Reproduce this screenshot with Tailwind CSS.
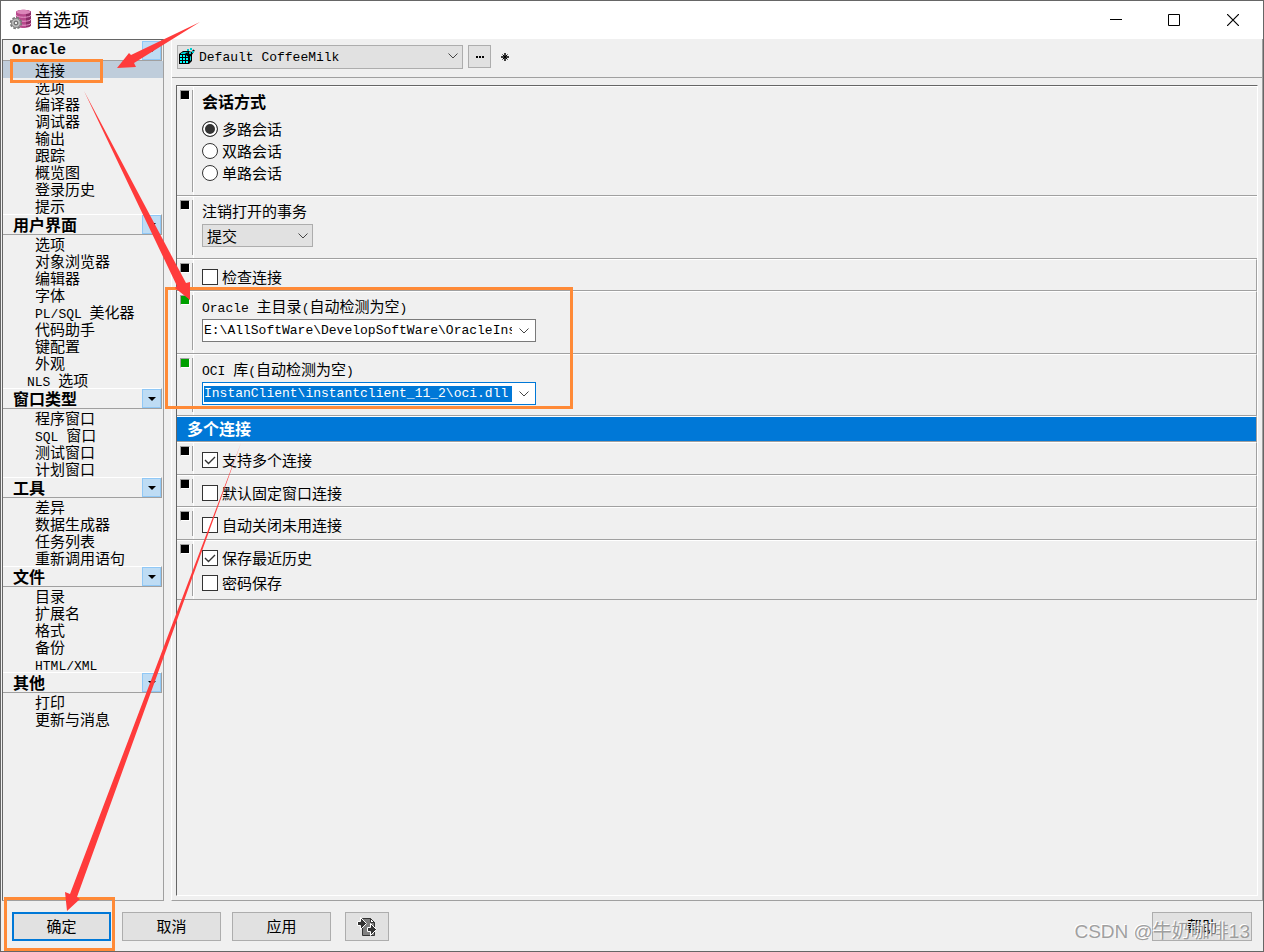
<!DOCTYPE html>
<html lang="zh-CN">
  <head>
    <meta charset="UTF-8" />
    <meta name="viewport" content="width=device-width, initial-scale=1" />
    <title>首选项</title>
    <!-- Tailwind CSS -->
    <script src="https://cdn.jsdelivr.net/npm/@tailwindcss/browser@4"></script>
  </head>
  <body class="bg-[#f0f0f0] text-black text-[15px] font-['Noto_Sans_CJK_SC',sans-serif]">
    <div class="relative min-h-screen flex flex-col border border-[#666] overflow-hidden">
      <!-- Barre de titre -->
      <header class="h-[38px] shrink-0 bg-white flex items-center pl-2">
        <svg class="w-6 h-6" viewBox="0 0 24 24">
          <path d="M7 4c0-3 15-3 15 0v13c0 4-15 4-15 0z" fill="#b8498c" />
          <path d="M17 2.500c4 .4 5 1 5 1.500v13c0 1-2 2-5 2z" fill="#8c2c68" />
          <path d="M7 7c0 3 15 3 15 0M8 11c0 3 14 3 14 0M8 15c0 3 14 3 14 0" fill="none" stroke="#e79aca" />
          <ellipse cx="14.500" cy="4" rx="7" ry="2.200" fill="#dc86ba" />
          <circle cx="7" cy="15" r="5" fill="#b5b5b5" stroke="#777" stroke-width="2.400" stroke-dasharray="2.400 1.500" />
          <circle cx="7" cy="15" r="4.500" fill="#bdbdbd" stroke="#888" />
          <circle cx="7" cy="15" r="1.900" fill="#eee" stroke="#555" />
        </svg>
        <h1 class="ml-[2px] pb-[2px] text-lg">首选项</h1>
        <div class="ml-auto flex">
          <button class="w-[58px] h-9 flex items-center justify-center" aria-label="最小化">
            <svg class="w-3 h-3" viewBox="0 0 12 12"><path d="M0 5.500h12" stroke="#000" /></svg>
          </button>
          <button class="w-[58px] h-9 flex items-center justify-center" aria-label="最大化">
            <svg class="w-3 h-3" viewBox="0 0 12 12"><path d="M.5.5h11v11H.5z" fill="none" stroke="#000" /></svg>
          </button>
          <button class="w-[60px] h-9 flex items-center justify-center" aria-label="关闭">
            <svg class="w-3 h-3" viewBox="0 0 12 12"><path d="M0 0l12 12M12 0L0 12" stroke="#000" stroke-width="1.200" /></svg>
          </button>
        </div>
      </header>

      <div class="grow flex">
        <!-- Menu de gauche -->
        <nav class="w-[162px] shrink-0 ml-px border-l border-t border-r border-b border-l-[#666] border-t-[#666] border-r-[#a0a0a0] border-b-[#a0a0a0] leading-[17px]">
          <section>
            <h2 class="h-[21px] mr-px pl-[9px] flex items-center justify-between font-bold font-['Liberation_Mono',monospace] border-b border-r border-[#a0a0a0]">
              Oracle
              <button class="w-[19px] h-[19px] bg-[#bedcf4] border border-[#90c8f6] flex items-center justify-center" aria-label="展开"><svg class="w-2 h-1" viewBox="0 0 8 4"><path d="M0 0h8L4 4z" /></svg></button>
            </h2>
            <ul class="*:h-[17px] *:pl-8">
              <li class="bg-[#bfcddb]"><a href="#">连接</a></li>
              <li><a href="#">选项</a></li>
              <li><a href="#">编译器</a></li>
              <li><a href="#">调试器</a></li>
              <li><a href="#">输出</a></li>
              <li><a href="#">跟踪</a></li>
              <li><a href="#">概览图</a></li>
              <li><a href="#">登录历史</a></li>
              <li><a href="#">提示</a></li>
            </ul>
          </section>
          <section>
            <h2 class="h-[21px] mr-px pl-[10px] flex items-center justify-between text-base leading-[17px] font-bold border-t border-t-white border-b border-r border-b-[#a0a0a0] border-r-[#a0a0a0]">
              用户界面
              <button class="w-[19px] h-[19px] bg-[#bedcf4] border border-[#90c8f6] flex items-center justify-center" aria-label="展开"><svg class="w-2 h-1" viewBox="0 0 8 4"><path d="M0 0h8L4 4z" /></svg></button>
            </h2>
            <ul class="*:h-[17px] *:pl-8">
              <li><a href="#">选项</a></li>
              <li><a href="#">对象浏览器</a></li>
              <li><a href="#">编辑器</a></li>
              <li><a href="#">字体</a></li>
              <li><a href="#"><span class="text-[13px] font-['Liberation_Mono',monospace]">PL/SQL </span>美化器</a></li>
              <li><a href="#">代码助手</a></li>
              <li><a href="#">键配置</a></li>
              <li><a href="#">外观</a></li>
              <li class="-ml-2"><a href="#"><span class="text-[13px] font-['Liberation_Mono',monospace]">NLS </span>选项</a></li>
            </ul>
          </section>
          <section>
            <h2 class="h-[21px] mr-px pl-[10px] flex items-center justify-between text-base leading-[17px] font-bold border-t border-t-white border-b border-r border-b-[#a0a0a0] border-r-[#a0a0a0]">
              窗口类型
              <button class="w-[19px] h-[19px] bg-[#bedcf4] border border-[#90c8f6] flex items-center justify-center" aria-label="展开"><svg class="w-2 h-1" viewBox="0 0 8 4"><path d="M0 0h8L4 4z" /></svg></button>
            </h2>
            <ul class="*:h-[17px] *:pl-8">
              <li><a href="#">程序窗口</a></li>
              <li><a href="#"><span class="text-[13px] font-['Liberation_Mono',monospace]">SQL </span>窗口</a></li>
              <li><a href="#">测试窗口</a></li>
              <li><a href="#">计划窗口</a></li>
            </ul>
          </section>
          <section>
            <h2 class="h-[21px] mr-px pl-[10px] flex items-center justify-between text-base leading-[17px] font-bold border-t border-t-white border-b border-r border-b-[#a0a0a0] border-r-[#a0a0a0]">
              工具
              <button class="w-[19px] h-[19px] bg-[#bedcf4] border border-[#90c8f6] flex items-center justify-center" aria-label="展开"><svg class="w-2 h-1" viewBox="0 0 8 4"><path d="M0 0h8L4 4z" /></svg></button>
            </h2>
            <ul class="*:h-[17px] *:pl-8">
              <li><a href="#">差异</a></li>
              <li><a href="#">数据生成器</a></li>
              <li><a href="#">任务列表</a></li>
              <li><a href="#">重新调用语句</a></li>
            </ul>
          </section>
          <section>
            <h2 class="h-[21px] mr-px pl-[10px] flex items-center justify-between text-base leading-[17px] font-bold border-t border-t-white border-b border-r border-b-[#a0a0a0] border-r-[#a0a0a0]">
              文件
              <button class="w-[19px] h-[19px] bg-[#bedcf4] border border-[#90c8f6] flex items-center justify-center" aria-label="展开"><svg class="w-2 h-1" viewBox="0 0 8 4"><path d="M0 0h8L4 4z" /></svg></button>
            </h2>
            <ul class="*:h-[17px] *:pl-8">
              <li><a href="#">目录</a></li>
              <li><a href="#">扩展名</a></li>
              <li><a href="#">格式</a></li>
              <li><a href="#">备份</a></li>
              <li><a href="#" class="text-[13px] font-['Liberation_Mono',monospace]">HTML/XML</a></li>
            </ul>
          </section>
          <section>
            <h2 class="h-[21px] mr-px pl-[10px] flex items-center justify-between text-base leading-[17px] font-bold border-t border-t-white border-b border-r border-b-[#a0a0a0] border-r-[#a0a0a0]">
              其他
              <button class="w-[19px] h-[19px] bg-[#bedcf4] border border-[#90c8f6] flex items-center justify-center" aria-label="展开"><svg class="w-2 h-1" viewBox="0 0 8 4"><path d="M0 0h8L4 4z" /></svg></button>
            </h2>
            <ul class="*:h-[17px] *:pl-8">
              <li><a href="#">打印</a></li>
              <li><a href="#">更新与消息</a></li>
            </ul>
          </section>
        </nav>

        <!-- Panneau de droite -->
        <main class="grow min-w-0 ml-[7px] border-l border-l-white border-r border-b border-r-[#a0a0a0] border-b-[#a0a0a0] flex flex-col">
          <div class="h-[39px] shrink-0 pl-[5px] pt-[5px] flex border-b border-[#a0a0a0]">
            <div class="relative w-[286px] h-6">
              <select aria-label="首选项集" class="appearance-none w-full h-6 pl-[21px] pt-[2px] bg-[#e1e1e1] border border-[#adadad] text-[13px] font-['Liberation_Mono',monospace]">
                <option>Default CoffeeMilk</option>
              </select>
              <svg class="absolute left-[2px] top-1 w-4 h-4" viewBox="0 0 16 16">
                <path d="M0 6l4-3h5l4 1v9l-3 3H0z" fill="#000" />
                <path d="M1 7h2v2H1zM4 7h2v2H4zM7 7h2v2H7zM1 10h2v2H1zM4 10h2v2H4zM7 10h2v2H7zM1 13h2v2H1zM4 13h2v2H4zM7 13h2v2H7z" fill="#0ff" />
                <path d="M2 5l3-1h4L8 6H2zM11 7l1-1v6l-1 1z" fill="#00d8d8" />
                <path d="M7 5l2 3M9 3l2 5M15 2l-4 6" stroke="#000" stroke-width="2" />
                <path d="M8 1h2v2H8zM11 0h2v2h-2zM13 3h2v2h-2zM10 4h2v2h-2z" fill="#0cc" />
              </svg>
              <svg class="absolute right-[5px] top-[9px] w-[10px] h-[6px] pointer-events-none" viewBox="0 0 10 6"><path d="M.5.5L5 5 9.500.5" fill="none" stroke="#444" /></svg>
            </div>
            <button class="ml-[5px] mt-px w-[23px] h-[23px] bg-[#e1e1e1] border border-[#adadad] flex items-center justify-center" aria-label="更多">
              <svg class="w-2 h-[2px]" viewBox="0 0 8 2"><path d="M0 0h2v2H0zM3 0h2v2H3zM6 0h2v2H6z" /></svg>
            </button>
            <svg class="ml-[10px] mt-[9px] w-2 h-2" viewBox="0 0 8 8"><path d="M4 0v8M0 4h8" stroke="#000" stroke-width="1.500" /><path d="M1.500 1.500l5 5M6.500 1.500l-5 5" stroke="#000" /></svg>
          </div>

          <div class="grow mt-[7px] mr-1 mb-1 ml-1 border-l border-t border-r border-b border-l-[#666] border-t-[#666] border-r-white border-b-white">
            <section class="h-[110px] flex border-t border-t-white border-b border-b-[#a0a0a0]">
              <div class="w-4 my-[3px] pl-[3px] border-r border-[#a0a0a0]"><i class="block w-[10px] h-[10px] bg-black border border-t-[#a0a0a0] border-l-[#a0a0a0] border-b-white border-r-white"></i></div>
              <div class="pl-2 pt-1 border-l border-white">
                <h3 class="h-5 leading-5 text-base font-bold">会话方式</h3>
                <div class="mt-[7px]">
                  <label class="h-[22px] flex items-center gap-1"><input type="radio" name="session" checked class="appearance-none w-4 h-4 rounded-full bg-white border border-[#333] checked:bg-[#333] checked:shadow-[inset_0_0_0_2px_#fff]" />多路会话</label>
                  <label class="h-[22px] flex items-center gap-1"><input type="radio" name="session" class="appearance-none w-4 h-4 rounded-full bg-white border border-[#333] checked:bg-[#333] checked:shadow-[inset_0_0_0_2px_#fff]" />双路会话</label>
                  <label class="h-[22px] flex items-center gap-1"><input type="radio" name="session" class="appearance-none w-4 h-4 rounded-full bg-white border border-[#333] checked:bg-[#333] checked:shadow-[inset_0_0_0_2px_#fff]" />单路会话</label>
                </div>
              </div>
            </section>

            <section class="h-[63px] flex border-t border-t-white border-b border-b-[#a0a0a0]">
              <div class="w-4 my-[3px] pl-[3px] border-r border-[#a0a0a0]"><i class="block w-[10px] h-[10px] bg-black border border-t-[#a0a0a0] border-l-[#a0a0a0] border-b-white border-r-white"></i></div>
              <div class="pl-2 pt-1 border-l border-white">
                <label for="logoff" class="block h-5 leading-5">注销打开的事务</label>
                <div class="relative mt-[3px] w-[111px]">
                  <select id="logoff" class="appearance-none block w-full h-[23px] pl-1 bg-[#e1e1e1] border border-[#adadad] leading-5">
                    <option>提交</option>
                    <option>回滚</option>
                  </select>
                  <svg class="absolute right-[5px] top-[9px] w-[10px] h-[6px] pointer-events-none" viewBox="0 0 10 6"><path d="M.5.5L5 5 9.500.5" fill="none" stroke="#444" /></svg>
                </div>
              </div>
            </section>

            <section class="h-8 flex border-t border-t-white border-b border-b-[#a0a0a0] border-r border-r-[#a0a0a0]">
              <div class="w-4 my-[3px] pl-[3px] border-r border-[#a0a0a0]"><i class="block w-[10px] h-[10px] bg-black border border-t-[#a0a0a0] border-l-[#a0a0a0] border-b-white border-r-white"></i></div>
              <div class="pl-2 pt-[6px] border-l border-white">
                <label class="h-[22px] flex items-center gap-1"><input type="checkbox" class="appearance-none w-4 h-4 bg-white border border-[#333]" />检查连接</label>
              </div>
            </section>

            <section class="h-[63px] flex border-t border-t-white border-b border-b-[#a0a0a0] border-r border-r-[#a0a0a0]">
              <div class="w-4 my-[3px] pl-[3px] border-r border-[#a0a0a0]"><i class="block w-[10px] h-[10px] bg-[#00a000] border border-t-[#a0a0a0] border-l-[#a0a0a0] border-b-white border-r-white"></i></div>
              <div class="pl-2 pt-1 border-l border-white">
                <label for="home" class="block h-5 leading-5"><span class="text-[13px] font-['Liberation_Mono',monospace]">Oracle </span>主目录<span class="text-[13px] font-['Liberation_Mono',monospace]">(</span>自动检测为空<span class="text-[13px] font-['Liberation_Mono',monospace]">)</span></label>
                <div class="mt-[3px] w-[334px] h-[23px] bg-white border border-[#7a7a7a] flex items-center pl-px">
                  <input id="home" type="text" value="E:\AllSoftWare\DevelopSoftWare\OracleInstanClient\instantclient_11_2" class="w-[308px] h-4 text-[13px] leading-4 font-['Liberation_Mono',monospace] outline-none" />
                  <button class="grow h-5 flex items-center justify-center" aria-label="展开"><svg class="w-[10px] h-[6px]" viewBox="0 0 10 6"><path d="M.5.5L5 5 9.500.5" fill="none" stroke="#444" /></svg></button>
                </div>
              </div>
            </section>

            <section class="h-[62px] flex border-t border-t-white border-b border-b-[#a0a0a0] border-r border-r-[#a0a0a0]">
              <div class="w-4 my-[3px] pl-[3px] border-r border-[#a0a0a0]"><i class="block w-[10px] h-[10px] bg-[#00a000] border border-t-[#a0a0a0] border-l-[#a0a0a0] border-b-white border-r-white"></i></div>
              <div class="pl-2 pt-1 border-l border-white">
                <label for="oci" class="block h-5 leading-5"><span class="text-[13px] font-['Liberation_Mono',monospace]">OCI </span>库<span class="text-[13px] font-['Liberation_Mono',monospace]">(</span>自动检测为空<span class="text-[13px] font-['Liberation_Mono',monospace]">)</span></label>
                <div class="mt-[3px] w-[334px] h-[23px] bg-white border border-[#0078d7] flex items-center pl-px">
                  <input id="oci" type="text" value="InstanClient\instantclient_11_2\oci.dll" class="w-[308px] h-4 bg-[#0078d7] text-white text-[13px] leading-4 font-['Liberation_Mono',monospace] outline-none" />
                  <button class="grow h-5 flex items-center justify-center" aria-label="展开"><svg class="w-[10px] h-[6px]" viewBox="0 0 10 6"><path d="M.5.5L5 5 9.500.5" fill="none" stroke="#444" /></svg></button>
                </div>
              </div>
            </section>

            <h3 class="h-[26px] pl-[10px] leading-6 bg-[#0078d7] text-white text-base leading-[22px] font-bold border-t border-t-white border-b border-b-[#a0a0a0] border-r border-r-[#a0a0a0]">多个连接</h3>

            <section class="h-[33px] flex border-t border-t-white border-b border-b-[#a0a0a0] border-r border-r-[#a0a0a0]">
              <div class="w-4 my-[3px] pl-[3px] border-r border-[#a0a0a0]"><i class="block w-[10px] h-[10px] bg-black border border-t-[#a0a0a0] border-l-[#a0a0a0] border-b-white border-r-white"></i></div>
              <div class="pl-2 pt-[6px] border-l border-white">
                <label class="h-[22px] flex items-center gap-1">
                  <span class="grid *:col-start-1 *:row-start-1">
                    <input type="checkbox" checked class="appearance-none w-4 h-4 bg-white border border-[#333]" />
                    <svg class="w-4 h-4" viewBox="0 0 16 16"><path d="M3 8l3.500 3.500L13 5" fill="none" stroke="#333" stroke-width="1.400" /></svg>
                  </span>支持多个连接</label>
              </div>
            </section>

            <section class="h-8 flex border-t border-t-white border-b border-b-[#a0a0a0] border-r border-r-[#a0a0a0]">
              <div class="w-4 my-[3px] pl-[3px] border-r border-[#a0a0a0]"><i class="block w-[10px] h-[10px] bg-black border border-t-[#a0a0a0] border-l-[#a0a0a0] border-b-white border-r-white"></i></div>
              <div class="pl-2 pt-[6px] border-l border-white">
                <label class="h-[22px] flex items-center gap-1"><input type="checkbox" class="appearance-none w-4 h-4 bg-white border border-[#333]" />默认固定窗口连接</label>
              </div>
            </section>

            <section class="h-[33px] flex border-t border-t-white border-b border-b-[#a0a0a0] border-r border-r-[#a0a0a0]">
              <div class="w-4 my-[3px] pl-[3px] border-r border-[#a0a0a0]"><i class="block w-[10px] h-[10px] bg-black border border-t-[#a0a0a0] border-l-[#a0a0a0] border-b-white border-r-white"></i></div>
              <div class="pl-2 pt-[6px] border-l border-white">
                <label class="h-[22px] flex items-center gap-1"><input type="checkbox" class="appearance-none w-4 h-4 bg-white border border-[#333]" />自动关闭未用连接</label>
              </div>
            </section>

            <section class="h-[60px] flex border-t border-t-white border-b border-b-[#a0a0a0] border-r border-r-[#a0a0a0]">
              <div class="w-4 my-[3px] pl-[3px] border-r border-[#a0a0a0]"><i class="block w-[10px] h-[10px] bg-black border border-t-[#a0a0a0] border-l-[#a0a0a0] border-b-white border-r-white"></i></div>
              <div class="pl-2 pt-[6px] border-l border-white">
                <label class="h-[22px] flex items-center gap-1">
                  <span class="grid *:col-start-1 *:row-start-1">
                    <input type="checkbox" checked class="appearance-none w-4 h-4 bg-white border border-[#333]" />
                    <svg class="w-4 h-4" viewBox="0 0 16 16"><path d="M3 8l3.500 3.500L13 5" fill="none" stroke="#333" stroke-width="1.400" /></svg>
                  </span>保存最近历史</label>
                <label class="mt-[3px] h-[22px] flex items-center gap-1"><input type="checkbox" class="appearance-none w-4 h-4 bg-white border border-[#333]" />密码保存</label>
              </div>
            </section>
          </div>
        </main>
      </div>

      <!-- Boutons du bas -->
      <footer class="h-[50px] shrink-0 pt-[11px] pl-[11px] pr-[11px] flex">
        <button class="w-[99px] h-[29px] bg-[#e1e1e1] border-2 border-[#0078d7]">确定</button>
        <button class="ml-[11px] w-[99px] h-[29px] bg-[#e1e1e1] border border-[#adadad]">取消</button>
        <button class="ml-[11px] w-[99px] h-[29px] bg-[#e1e1e1] border border-[#adadad]">应用</button>
        <button class="ml-[14px] w-11 h-[29px] bg-[#e1e1e1] border border-[#adadad] flex items-center justify-center" aria-label="导入导出">
          <svg class="w-5 h-5" viewBox="0 0 20 20">
            <path d="M5.500 1.500h8l4 4v13h-12z" fill="#808080" stroke="#333" />
            <path d="M13.500 1.500v4h4z" fill="#fff" stroke="#333" />
            <path d="M.5 4.500h3v-4l6 6-6 6v-4h-3z" fill="#333" stroke="#fff" />
            <path d="M10.500 10.500h3v-4l6 6-6 6v-4h-3z" fill="#333" stroke="#fff" />
          </svg>
        </button>
        <button class="ml-auto w-[100px] h-[29px] bg-[#e1e1e1] border border-[#adadad]">帮助</button>
      </footer>

      <!-- Annotations par-dessus la fenêtre -->
      <svg class="absolute -left-px -top-px w-[1264px] h-[952px] pointer-events-none" viewBox="0 0 1264 952">
        <g fill="none" stroke="#ff8a37" stroke-width="3">
          <path d="M11.500 60.500h90v21h-90z" />
          <path d="M166.500 288.500h405v119h-405z" />
          <path d="M5.500 898.500h108v51H5.500z" />
        </g>
        <g fill="#ff3b3b">
          <path d="M200 22L131 55l-2-2-12 15 19-1-2-4z" />
          <path d="M84 91l93 195-2 2 15 12v-18l-4 1z" />
          <path d="M241 443L70 894l-5-2 2 19 13-12-3-2z" />
        </g>
      </svg>
      <p class="absolute right-[13px] bottom-[5px] text-[19px] leading-7 text-[#888]/80 [text-shadow:-1px_-1px_0_#fff] font-['Liberation_Sans','Noto_Sans_CJK_SC',sans-serif] pointer-events-none">CSDN @牛奶咖啡13</p>
    </div>
  </body>
</html>
